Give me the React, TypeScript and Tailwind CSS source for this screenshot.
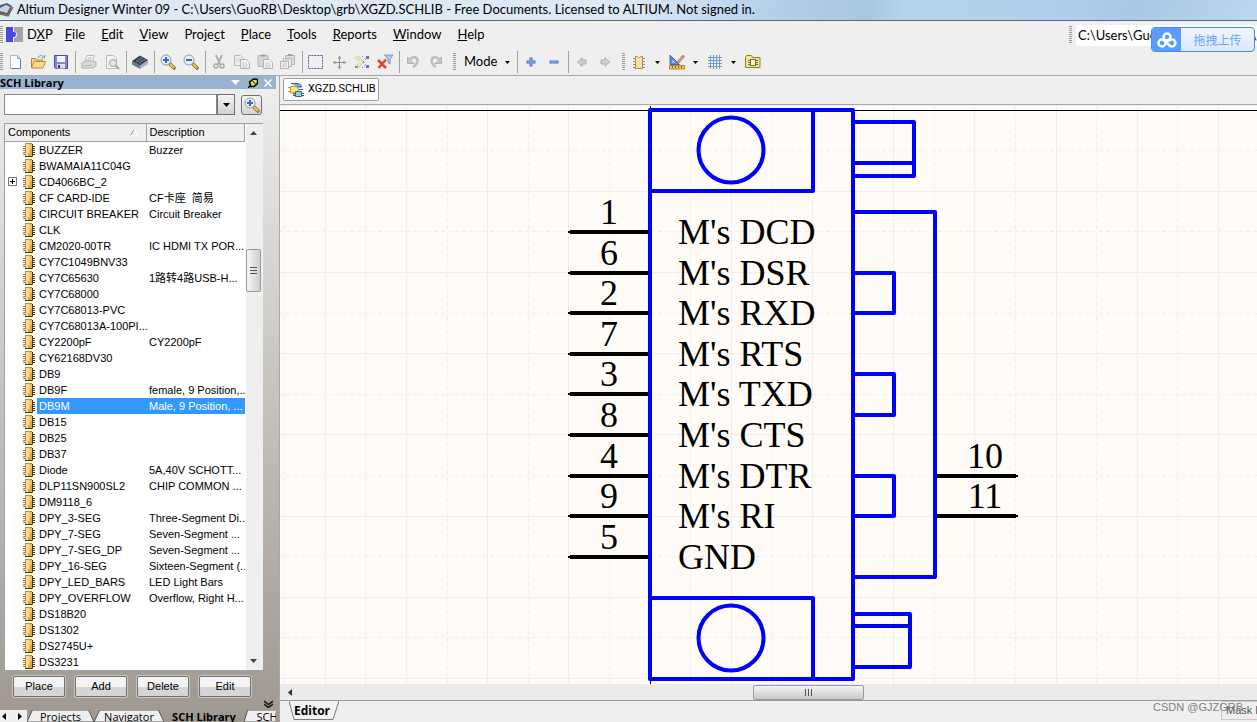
import React from 'react';

interface LibraryPart {
  name: string;
  description?: string;
  expandable?: boolean;
}

const parts: LibraryPart[] = [
  { name: 'BUZZER', description: 'Buzzer' },
  { name: 'BWAMAIA11C04G' },
  { name: 'CD4066BC_2', expandable: true },
  { name: 'CF CARD-IDE', description: 'CF卡座  简易' },
  { name: 'CIRCUIT BREAKER', description: 'Circuit Breaker' },
  { name: 'CLK' },
  { name: 'CM2020-00TR', description: 'IC HDMI TX POR...' },
  { name: 'CY7C1049BNV33' },
  { name: 'CY7C65630', description: '1路转4路USB-H...' },
  { name: 'CY7C68000' },
  { name: 'CY7C68013-PVC' },
  { name: 'CY7C68013A-100PI...' },
  { name: 'CY2200pF', description: 'CY2200pF' },
  { name: 'CY62168DV30' },
  { name: 'DB9' },
  { name: 'DB9F', description: 'female, 9 Position,...' },
  { name: 'DB9M', description: 'Male, 9 Position, ...' },
  { name: 'DB15' },
  { name: 'DB25' },
  { name: 'DB37' },
  { name: 'Diode', description: '5A,40V SCHOTT...' },
  { name: 'DLP11SN900SL2', description: 'CHIP COMMON ...' },
  { name: 'DM9118_6' },
  { name: 'DPY_3-SEG', description: 'Three-Segment Di...' },
  { name: 'DPY_7-SEG', description: 'Seven-Segment ...' },
  { name: 'DPY_7-SEG_DP', description: 'Seven-Segment ...' },
  { name: 'DPY_16-SEG', description: 'Sixteen-Segment (...' },
  { name: 'DPY_LED_BARS', description: 'LED Light Bars' },
  { name: 'DPY_OVERFLOW', description: 'Overflow, Right H...' },
  { name: 'DS18B20' },
  { name: 'DS1302' },
  { name: 'DS2745U+' },
  { name: 'DS3231' },
];

// [before, underlined letter, after]
const menus: [string, string, string][] = [
  ['', 'F', 'ile'],
  ['', 'E', 'dit'],
  ['', 'V', 'iew'],
  ['Proje', 'c', 't'],
  ['', 'P', 'lace'],
  ['', 'T', 'ools'],
  ['', 'R', 'eports'],
  ['', 'W', 'indow'],
  ['', 'H', 'elp'],
];

const leftPins = [
  { number: '1', label: "M's DCD" },
  { number: '6', label: "M's DSR" },
  { number: '2', label: "M's RXD" },
  { number: '7', label: "M's RTS" },
  { number: '3', label: "M's TXD" },
  { number: '8', label: "M's CTS" },
  { number: '4', label: "M's DTR" },
  { number: '9', label: "M's RI" },
  { number: '5', label: 'GND' },
];

const Svg: React.FC<{ children: React.ReactNode; className?: string }> = ({ children, className = 'w-4 h-4' }) => (
  <svg viewBox="0 0 16 16" className={`${className} shrink-0`} fill="none" aria-hidden="true">
    {children}
  </svg>
);

const ChipIcon = () => (
  <svg viewBox="0 0 12 14" className="w-3 h-3.5 shrink-0" aria-hidden="true">
    <path d="M0 3.500h3M0 5.500h3M0 7.500h3M0 9.500h3M0 11.500h3" stroke="#8a7c58" />
    <path d="M9 3.500h3M9 5.500h3M9 7.500h3M9 9.500h3M9 11.500h3" stroke="#3a3222" />
    <path d="M3 1h6v12H3z" fill="#eec56a" />
    <path d="M3 1h3v12H3z" fill="#f8dc98" />
    <path d="M7 6h2v7H5v-3h2z" fill="#dfa845" />
    <path d="M2.500 13V.500H9" stroke="#b08d45" fill="none" />
    <path d="M9.500 1v12.500H2" stroke="#4a3712" fill="none" />
  </svg>
);

const ZoomIcon: React.FC<{ minus?: boolean }> = ({ minus }) => (
  <Svg>
    <path d="M10 10l4 4" stroke="#8a6a1c" strokeWidth="3.500" strokeLinecap="round" />
    <path d="M10.500 10.500l3 3" stroke="#ecc860" strokeWidth="2" strokeLinecap="round" />
    <circle cx="6" cy="6" r="5" fill="#e4f0ff" stroke="#8f9bb3" />
    <path d={minus ? 'M3 6h6' : 'M3 6h6M6 3v6'} stroke="#3b68c4" strokeWidth="2" />
  </Svg>
);

const CopyIcon: React.FC<{ board?: boolean }> = ({ board }) => (
  <Svg>
    {board && <rect x="1" y="1.500" width="10" height="11" rx="1" fill="#d5d5d5" stroke="#b5b5b5" />}
    {board && <path d="M4 1.500h4" stroke="#9f9f9f" strokeWidth="2" />}
    {!board && <path d="M.500 1.500h6l3 3v7h-9z" fill="#f1f1f1" stroke="#b9b9b9" />}
    {!board && <path d="M2 5h5M2 7h5" stroke="#ccc" />}
    <path d="M6.500 5.500h6l3 3v6h-9z" fill="#f3f3f3" stroke="#b3b3b3" />
    <path d="M8 9h5M8 11h6M8 13h5" stroke="#c6c6c6" />
  </Svg>
);

const PasteArrayIcon = () => (
  <Svg>
    <path d="M5.500 1.500h9v9h-9z" fill="#dcdcdc" stroke="#b5b5b5" />
    <path d="M8 1h4" stroke="#9f9f9f" strokeWidth="2" />
    <path d="M3.500 4.500h8v8h-8z" fill="#efefef" stroke="#b5b5b5" />
    <path d="M.500 7.500h8v7h-8z" fill="#f3f3f3" stroke="#b3b3b3" />
    <path d="M2 10h5M2 12h5M5 6h5" stroke="#c2c2c2" />
  </Svg>
);

const DocIcon = () => (
  <Svg>
    <path d="M3.500 1.500h7l3 3v10h-10z" fill="#fbfdff" stroke="#a9b8cd" />
    <path d="M10.500 1.500v3h3" fill="#d4e0f0" stroke="#8fa2bd" />
    <path d="M4.500 14.500h9v-9" stroke="#62799b" />
  </Svg>
);

const OpenIcon = () => (
  <Svg>
    <path d="M1.500 13.500v-9h4l1 1.500h6v3" fill="#f4d78a" stroke="#b28a35" />
    <path d="M1.500 14L4 7.500h11.500L13 14z" fill="#fbdc8c" stroke="#b98f37" />
    <path d="M8 4c1-3 4-3 5.500-1M14.500 1v3h-3" stroke="#7593c2" />
  </Svg>
);

const SaveIcon = () => (
  <Svg>
    <path d="M1.500 1.500h13v13h-12l-1-1z" fill="#8583e0" stroke="#4c4aab" />
    <rect x="4" y="2" width="8" height="6" fill="#f5f7ff" />
    <rect x="4" y="10" width="8" height="4.500" fill="#dfe0f6" />
    <rect x="5" y="11" width="2" height="3" fill="#38367d" />
  </Svg>
);

const PrintIcon = () => (
  <Svg>
    <path d="M4 8l2-6.500h7L11.500 8" fill="#f7f7f7" stroke="#b8b8b8" />
    <path d="M1 9l3-2h9l2 1v4l-3 2H1z" fill="#d9d9d9" stroke="#b1b1b1" />
    <path d="M2 11.500h9M7 4h4M6 6h4" stroke="#b9b9b9" />
  </Svg>
);

const PreviewIcon = () => (
  <Svg>
    <path d="M2.500 1.500h7l3 3v10h-10z" fill="#f4f4f4" stroke="#bcbcbc" />
    <circle cx="9" cy="9" r="3.500" fill="#e6e6e6" stroke="#a5a5a5" />
    <path d="M11.500 11.500L15 15" stroke="#a5a5a5" strokeWidth="2" />
  </Svg>
);

const LibraryIcon = () => (
  <Svg>
    <path d="M0 7l8 4.500V15L0 10.500z" fill="#6b7889" />
    <path d="M16 6l-8 5.500V15l8-5z" fill="#9fb2ca" />
    <path d="M0 7l8-5.500L16 6l-8 5.500z" fill="#35414f" />
    <path d="M4 6.500l5 2.800M6 5l5 2.800M8 3.500l5 2.800M4 8l6-4.500M7 9.500l6-4.500" stroke="#76879b" strokeWidth=".7" />
  </Svg>
);

const CutIcon = () => (
  <Svg>
    <path d="M5 1l4 9M11 1l-4 9" stroke="#b0b0b0" strokeWidth="2" />
    <circle cx="5" cy="12" r="2" stroke="#a8a8a8" strokeWidth="1.500" />
    <circle cx="11" cy="12" r="2" stroke="#a8a8a8" strokeWidth="1.500" />
  </Svg>
);

const SelectIcon = () => (
  <Svg>
    <rect x=".5" y="1.500" width="14" height="13" stroke="#45639f" strokeDasharray="2 1" />
  </Svg>
);

const MoveIcon = () => (
  <Svg>
    <path d="M8.500 2v13M2 8.500h13" stroke="#8c8c8c" />
    <path d="M6.500 4.500h4l-2-3zM6.500 12.500h4l-2 3zM4.500 6.500v4l-3-2zM12.500 6.500v4l3-2z" fill="#9a9a9a" />
  </Svg>
);

const DeselectIcon = () => (
  <Svg>
    <path d="M1 3l4 4M4 2l5 6-5 6M1 13l4-4" stroke="#d8c25a" strokeWidth="1.500" strokeDasharray="1.500 1" />
    <path d="M9 8l4-4M9 8l4 4M8 2l3 3M8 14l3-3" stroke="#7d93bd" strokeDasharray="1.500 1" />
    <path d="M12 2h3v3h-3zM12 11h3v3h-3z" fill="#5b79ae" />
    <path d="M1 12h3v2H1z" fill="#7d93bd" />
  </Svg>
);

const ClearFilterIcon = () => (
  <Svg>
    <path d="M7.500 1h8.500l-3 4v5l-2-1.500V5z" fill="#b9c9e3" stroke="#7189b5" strokeWidth=".8" />
    <path d="M1 6l8 8M9 5.500L1.500 14" stroke="#e0442e" strokeWidth="2.500" />
  </Svg>
);

const UndoIcon: React.FC<{ redo?: boolean }> = ({ redo }) => (
  <Svg>
    <g transform={redo ? 'translate(16 0) scale(-1 1)' : undefined}>
      <path d="M5 5c4-3 8-2 7.500 2.500-.5 2.500-2 4-4.500 5.500" stroke="#bdbdbd" strokeWidth="2.500" />
      <path d="M2.500 3v6.500H9z" fill="#c9c9c9" stroke="#b3b3b3" />
    </g>
  </Svg>
);

const ArrowIcon: React.FC<{ right?: boolean }> = ({ right }) => (
  <Svg>
    <path
      d={right ? 'M4 6h4V3.500L12.500 8 8 12.500V10H4z' : 'M12 6H8V3.500L3.500 8 8 12.500V10h4z'}
      fill="#cfcfcf"
      stroke="#adadad"
    />
  </Svg>
);

const PartIcon = () => (
  <Svg>
    <path d="M2 4.500h12M2 7.500h12M2 10.500h12M2 13.500h12" stroke="#87909c" />
    <path d="M4.500 2.500h2l1 1h1l1-1h2v12h-7z" fill="#f9dfa6" stroke="#a98a4b" />
  </Svg>
);

const DrawIcon = () => (
  <Svg>
    <path d="M1 1v9.500h9.500z" fill="#5f86dc" stroke="#4068bd" />
    <path d="M3.500 6v2.500H6z" fill="#eef3ff" />
    <path d="M8 8l6-7 1.500 1.500-6 7z" fill="#dd9b85" stroke="#a56452" strokeWidth=".7" />
    <rect x=".5" y="11.500" width="15" height="3.500" fill="#f5c65c" stroke="#b98a2c" />
    <path d="M3.500 12v2M6.500 12v2M9.500 12v2M12.500 12v2" stroke="#8c6519" />
  </Svg>
);

const GridIcon = () => (
  <Svg>
    <path d="M1 3.500h14M1 6.500h14M1 9.500h14M1 12.500h14M3.500 1v14M6.500 1v14M9.500 1v14M12.500 1v14" stroke="#6f97e0" />
  </Svg>
);

const FolderPartIcon = () => (
  <Svg>
    <path d="M.5 13.500v-10l1-2h5l1 2h7.500v10z" fill="#f2e691" stroke="#8b8132" />
    <path d="M3 6.500h10M3 8.500h10M3 10.500h10" stroke="#6d6d4c" />
    <rect x="5.500" y="5.500" width="5" height="6" fill="#fff8cd" stroke="#6d6d4c" />
  </Svg>
);

const SchLibIcon = () => (
  <Svg>
    <path d="M3 1.500h6c3 0 4.500 2 4.500 3.500H9" fill="#79aef0" stroke="#2a62b8" />
    <path d="M0 5.500h3M0 9.500h3" stroke="#d08a16" />
    <path d="M9 7.500h6M9 12h-4M16 11.500h-3" stroke="#2a62b8" />
    <path d="M2.500 4.500h4c3 0 4 2 4 3.200s-1 3.300-4 3.300h-4z" fill="#ffe27a" stroke="#d08a16" />
    <path d="M7.500 9.500h6v5h-6z" fill="#9fd0c6" stroke="#33628b" />
    <path d="M5 11.500h2M5 13.500h2M14 13.500h2" stroke="#33628b" />
  </Svg>
);

const Grip = () => (
  <span className="h-[18px] w-[3px] shrink-0 bg-[repeating-linear-gradient(to_bottom,#9a9a9a_0px,#9a9a9a_1px,transparent_1px,transparent_2px)]" />
);

const Separator = () => <span className="ml-[3px] mr-px h-[22px] w-px shrink-0 bg-[#a0a0a0]" />;

const Caret = () => (
  <svg viewBox="0 0 5 3" className="h-[3px] w-[5px] shrink-0" aria-hidden="true">
    <path d="M0 0h5L2.500 3z" fill="#000" />
  </svg>
);

const Tool: React.FC<{ label: string; children: React.ReactNode }> = ({ label, children }) => (
  <button type="button" aria-label={label} className="flex h-6 w-[23px] shrink-0 items-center justify-center">
    {children}
  </button>
);

const TitleBar = () => (
  <header className="flex h-[21px] shrink-0 items-center overflow-hidden border-b border-[#56687a] bg-[linear-gradient(100deg,#dfeaf5_0%,#dce8f5_50%,#b3cfea_62%,#a9c6e2_69%,#b5d3ee_72%,#b1cfec_85%,#a9c8e5_90%,#bdd6f0_100%)]">
    <svg viewBox="0 0 14 16" className="h-4 w-3.5 shrink-0" aria-hidden="true">
      <path d="M0 3l7-2 5 3-3 10-9-2z" fill="#57616e" />
      <path d="M0 6l6-3 4 2-3 6-7-2z" fill="#c9d3df" />
      <path d="M0 12l8 2 5-9" stroke="#8c6a42" strokeWidth="1.500" fill="none" />
    </svg>
    <h1 className="ml-[3px] whitespace-nowrap text-[13px] text-black">
      Altium Designer Winter 09 - C:\Users\GuoRB\Desktop\grb\XGZD.SCHLIB - Free Documents. Licensed to ALTIUM. Not signed in.
    </h1>
  </header>
);

const MenuBar = () => (
  <nav className="flex h-7 shrink-0 items-center text-[13px]">
    <Grip />
    <button type="button" className="flex items-center pl-[3px] pr-1">
      <svg viewBox="0 0 17 16" className="mr-1 h-4 w-[17px]" aria-hidden="true">
        <path d="M0 0h7v5c4-2 4 6 0 5v5H0z" fill="#4a4ae0" />
        <path d="M8 0h9v15H8v-4c4 1 4-8 0-6z" fill="#a3a3a3" />
      </svg>
      <span>
        D<u>X</u>P
      </span>
    </button>
    {menus.map(([before, key, after]) => (
      <button type="button" key={before + key + after} className="px-2">
        {before}
        <u>{key}</u>
        {after}
      </button>
    ))}
    <span className="grow" />
    <Grip />
    <input
      aria-label="Document path"
      defaultValue="C:\Users\GuoRB\Desktop\grb\XGZD.SCHLIB"
      className="ml-1 h-[21px] w-[181px] bg-white pl-0.5 outline-none"
    />
  </nav>
);

const Toolbar = () => (
  <div role="toolbar" className="flex h-[27px] shrink-0 items-center border-b border-[#a8a8a8]">
    <Grip />
    <Tool label="New"><DocIcon /></Tool>
    <Tool label="Open"><OpenIcon /></Tool>
    <Tool label="Save"><SaveIcon /></Tool>
    <Separator />
    <Tool label="Print"><PrintIcon /></Tool>
    <Tool label="Print preview"><PreviewIcon /></Tool>
    <Separator />
    <Tool label="Devices view"><LibraryIcon /></Tool>
    <Separator />
    <Tool label="Zoom in"><ZoomIcon /></Tool>
    <Tool label="Zoom out"><ZoomIcon minus /></Tool>
    <Separator />
    <Tool label="Cut"><CutIcon /></Tool>
    <Tool label="Copy"><CopyIcon /></Tool>
    <Tool label="Paste"><CopyIcon board /></Tool>
    <Tool label="Paste array"><PasteArrayIcon /></Tool>
    <Separator />
    <Tool label="Select"><SelectIcon /></Tool>
    <Tool label="Move"><MoveIcon /></Tool>
    <Tool label="Deselect"><DeselectIcon /></Tool>
    <Tool label="Clear filter"><ClearFilterIcon /></Tool>
    <Separator />
    <Tool label="Undo"><UndoIcon /></Tool>
    <Tool label="Redo"><UndoIcon redo /></Tool>
    <span className="w-1.5" />
    <Grip />
    <button type="button" className="flex items-center gap-2 pl-2 pr-1 text-[13px]">
      Mode
      <Caret />
    </button>
    <Separator />
    <Tool label="Add mode">
      <Svg><path d="M8 3.500v9M3.500 8h9" stroke="#4f7bd0" strokeWidth="3" /><path d="M8 4.500v7M4.500 8h7" stroke="#8fb0ee" /></Svg>
    </Tool>
    <Tool label="Remove mode">
      <Svg><path d="M3.500 8h9" stroke="#4f7bd0" strokeWidth="3" /><path d="M4.500 8h7" stroke="#8fb0ee" /></Svg>
    </Tool>
    <Separator />
    <Tool label="Previous mode"><ArrowIcon /></Tool>
    <Tool label="Next mode"><ArrowIcon right /></Tool>
    <span className="w-1.5" />
    <Grip />
    <button type="button" aria-label="Place part" className="flex items-center gap-2 pl-1.5"><PartIcon /><Caret /></button>
    <button type="button" aria-label="Drawing tools" className="flex items-center gap-2 pl-[9px]"><DrawIcon /><Caret /></button>
    <button type="button" aria-label="Grids" className="flex items-center gap-2 pl-[9px]"><GridIcon /><Caret /></button>
    <button type="button" aria-label="Model manager" className="pl-[9px]"><FolderPartIcon /></button>
  </div>
);

const PanelButton: React.FC<{ children: string }> = ({ children }) => (
  <button
    type="button"
    className="h-[21px] w-[52px] rounded-[2px] border border-[#707070] bg-gradient-to-b from-[#f4f4f4] from-50% to-[#d6d6d6] to-55% shadow-[0_0_0_1px_#c9c6c1]"
  >
    {children}
  </button>
);

const ComponentTable = () => (
  <table className="w-[240px] shrink-0 table-fixed border-collapse self-start">
    <colgroup>
      <col className="w-[141px]" />
      <col />
    </colgroup>
    <thead>
      <tr className="h-[17px] border-b border-[#a0a0a0] bg-[#efefef] text-left leading-4">
        <th className="p-0 pl-[3px] font-normal">
          <span className="flex items-center justify-between pr-2">
            Components
            <svg viewBox="0 0 8 7" className="h-[7px] w-2" aria-hidden="true">
              <path d="M.500 6.500L4 .500" stroke="#999" />
              <path d="M4 .500l3.500 6h-7" stroke="#fff" fill="none" />
            </svg>
          </span>
        </th>
        <th className="border-x border-[#a0a0a0] p-0 pl-[3px] font-normal">Description</th>
      </tr>
    </thead>
    <tbody>
      {parts.map((part) => {
        const selected = part.name === 'DB9M';
        return (
          <tr key={part.name} className="h-4">
            <td className="p-0">
              <div className="flex h-4 items-center whitespace-nowrap">
                <span className="flex w-[18px] shrink-0 pl-[3px]">
                  {part.expandable && (
                    <svg viewBox="0 0 9 9" className="h-[9px] w-[9px]" aria-hidden="true">
                      <path d="M.5 .5h8v8h-8z" fill="#fff" stroke="#777" />
                      <path d="M2 4.500h5M4.500 2v5" stroke="#000" />
                    </svg>
                  )}
                </span>
                <ChipIcon />
                <span className={`ml-0.5 grow pl-[2px] leading-4 ${selected ? 'bg-[#3399ff] text-white' : ''}`}>{part.name}</span>
              </div>
            </td>
            <td className={`whitespace-pre p-0 pl-[3px] leading-4 ${selected ? 'bg-[#3399ff] text-white' : ''}`}>
              {part.description}
            </td>
          </tr>
        );
      })}
    </tbody>
  </table>
);

const ListScrollbar = () => (
  <div className="flex grow flex-col items-center border-l border-white bg-[#efefef] pr-0.5">
    <svg viewBox="0 0 7 4" className="mt-[7px] h-1 w-[7px]" aria-hidden="true"><path d="M0 4h7L3.500 0z" fill="#444" /></svg>
    <div className="mt-[114px] flex h-[43px] w-[15px] flex-col items-center justify-center gap-0.5 rounded-[2px] border border-[#999] bg-gradient-to-r from-[#f5f5f5] to-[#cfcfcf]">
      <span className="h-px w-[7px] bg-[#555]" />
      <span className="h-px w-[7px] bg-[#555]" />
      <span className="h-px w-[7px] bg-[#555]" />
    </div>
    <span className="grow" />
    <svg viewBox="0 0 7 4" className="mb-[7px] h-1 w-[7px]" aria-hidden="true"><path d="M0 0h7L3.500 4z" fill="#444" /></svg>
  </div>
);

const PanelTab: React.FC<{ children: string; active?: boolean; className?: string }> = ({ children, active, className = '' }) => (
  <button type="button" className={`relative h-3 shrink-0 ${className}`}>
    <svg viewBox="0 0 100 12" preserveAspectRatio="none" className="absolute inset-0 h-full w-full" aria-hidden="true">
      {!active && <path d="M8 0h84l8 12H0z" fill="#efefef" stroke="#555" vectorEffect="non-scaling-stroke" />}
    </svg>
    <span className={`relative block leading-[14px] ${active ? 'font-bold' : ''}`}>{children}</span>
  </button>
);

const LibraryPanel = () => (
  <aside className="flex w-[280px] shrink-0 flex-col border-r border-[#a8a8a8] bg-gradient-to-b from-[#efefef] to-[#9e9890] font-['Liberation_Sans','Noto_Sans_CJK_SC',sans-serif] text-[11px]">
    <div className="mr-[3px] flex h-[13px] shrink-0 items-center bg-[#99b4d1] pr-1">
      <h2 className="grow font-['Open_Sans',sans-serif] text-[11px] font-bold leading-[13px]">SCH Library</h2>
      <svg viewBox="0 0 9 5" className="h-[5px] w-[9px]" aria-hidden="true"><path d="M0 0h9L4.500 5z" fill="#fff" /></svg>
      <svg viewBox="0 0 10 10" className="ml-2 h-2.5 w-2.5" aria-hidden="true">
        <path d="M0 10l4-4" stroke="#000" strokeWidth="1.500" />
        <path d="M1.500 4l4-3 4 .500v4L6 8.500H3z" fill="#e8dc55" stroke="#000" strokeWidth="1.500" />
        <path d="M4 2.500l4 4" stroke="#000" />
      </svg>
      <svg viewBox="0 0 8 8" className="ml-1.5 h-2 w-2" aria-hidden="true"><path d="M.5 .5l7 7M7.500 .5l-7 7" stroke="#fff" strokeWidth="1.500" /></svg>
    </div>

    <div className="ml-1 mt-[5px] flex shrink-0 items-center">
      <input aria-label="Filter components" className="h-[21px] w-[213px] border border-[#8a8a8a] bg-white px-1 outline-none" />
      <button type="button" aria-label="Show filters" className="flex h-[21px] w-[18px] items-center justify-center border border-[#707070] bg-gradient-to-b from-[#f4f4f4] to-[#d2d2d2]">
        <svg viewBox="0 0 7 4" className="h-1 w-[7px]" aria-hidden="true"><path d="M0 0h7L3.500 4z" fill="#000" /></svg>
      </button>
      <button type="button" aria-label="Find component" className="ml-1.5 flex h-5 w-[21px] items-center justify-center rounded-[3px] border border-[#707070] bg-gradient-to-b from-[#f4f4f4] to-[#d6d6d6]">
        <ZoomIcon />
      </button>
    </div>

    <div className="ml-1 mt-2 flex min-h-0 w-[259px] grow overflow-hidden border border-r-0 border-[#a0a0a0] bg-white">
      <ComponentTable />
      <ListScrollbar />
    </div>

    <div className="ml-[13px] mt-[5px] flex shrink-0 gap-2.5">
      <PanelButton>Place</PanelButton>
      <PanelButton>Add</PanelButton>
      <PanelButton>Delete</PanelButton>
      <PanelButton>Edit</PanelButton>
    </div>

    <div className="flex h-[13px] shrink-0 items-end justify-end pb-0.5 pr-1.5">
      <svg viewBox="0 0 9 8" className="h-2 w-[9px]" aria-hidden="true">
        <path d="M0 1l4.500 3.500L9 1M0 4l4.500 3.500L9 4" stroke="#111" strokeWidth="1.500" fill="none" />
      </svg>
    </div>

    <div className="mr-[3px] flex h-3 shrink-0 overflow-hidden font-['Open_Sans',sans-serif]">
      <div className="flex w-[27px] shrink-0 items-center gap-3 bg-[#efefef] pl-0.5">
        <svg viewBox="0 0 4 7" className="h-[7px] w-1" aria-hidden="true"><path d="M4 0v7L0 3.500z" /></svg>
        <svg viewBox="0 0 4 7" className="h-[7px] w-1" aria-hidden="true"><path d="M0 0v7l4-3.500z" /></svg>
      </div>
      <PanelTab className="w-[67px]">Projects</PanelTab>
      <PanelTab className="w-[70px]">Navigator</PanelTab>
      <PanelTab className="w-20" active>SCH Library</PanelTab>
      <PanelTab className="w-[46px]">SCH</PanelTab>
    </div>
  </aside>
);

const GRID = 40.6;

// Origin of the sheet is the top left corner of the part body
const Sheet = () => (
  <svg className="h-full w-full bg-[#fffcf7]" role="img" aria-label="DB9M schematic symbol">
    <g transform="translate(370 4)">
      <g stroke="#eeeeec" shapeRendering="crispEdges">
        {Array.from({ length: 60 }, (_, i) => i - 9).map((i) => (
          <line key={i} x1={i * GRID} x2={i * GRID} y1={-4} y2={2000} strokeDasharray={i % 2 ? '4 3' : undefined} />
        ))}
        {Array.from({ length: 40 }, (_, i) => i).map((i) => (
          <line key={i} x1={-370} x2={2600} y1={i * GRID} y2={i * GRID} strokeDasharray={i % 2 ? '4 3' : undefined} />
        ))}
      </g>

      <path d="M-370 .5H2600M.5 -4V2000" stroke="#000" shapeRendering="crispEdges" />

      <g stroke="#0000ff" strokeWidth="4" fill="none" strokeLinejoin="round">
        <rect x="0" y="0" width="203" height="569" />
        <path d="M163 0v81H0M0 488h163v81" />
        <circle cx="81" cy="40" r="32.500" />
        <circle cx="81" cy="528" r="32.500" />
        <path d="M203 12h61v54h-61M203 53h61" />
        <path d="M203 504h57v53h-57M203 516h57" />
        <path d="M203 102h82v365h-82" />
        <path d="M203 163h41v40h-41M203 264h41v41h-41M203 366h41v40h-41" />
      </g>

      <g fontSize="36" fontFamily="'Liberation Serif', 'Times New Roman', serif" fill="#000">
        {leftPins.map((pin, i) => {
          const y = Math.round(122 + i * GRID);
          return (
            <g key={pin.number}>
              <path d={`M-80 ${y}H-2`} stroke="#000" strokeWidth="4" />
              <path d={`M-82 ${y}h2`} stroke="#000" strokeWidth="2" />
              <text x="-41" y={y - 8} textAnchor="middle">{pin.number}</text>
              <text x="28" y={y + 12}>{pin.label}</text>
            </g>
          );
        })}
        <path d="M287 366h79M287 406h79" stroke="#000" strokeWidth="4" />
        <path d="M366 366h2M366 406h2" stroke="#000" strokeWidth="2" />
        <text x="335" y="358" textAnchor="middle">10</text>
        <text x="335" y="398" textAnchor="middle">11</text>
      </g>
    </g>
  </svg>
);

const Editor = () => (
  <main className="flex min-w-0 grow flex-col">
    <div className="flex h-[29px] shrink-0 items-start border-b border-[#a8a8a8] pl-[3px] pt-0.5">
      <button type="button" className="flex h-[23px] items-center gap-1 rounded-[2px] border border-[#a0a0a0] bg-white pl-1 pr-0.5 font-[Roboto,sans-serif] text-[11px]">
        <SchLibIcon />
        XGZD.SCHLIB
      </button>
    </div>
    <div className="mt-px min-h-0 grow overflow-hidden">
      <Sheet />
    </div>
    <div className="flex h-4 shrink-0 items-center bg-[#ebebeb]">
      <svg viewBox="0 0 4 7" className="ml-2 h-[7px] w-1" aria-hidden="true"><path d="M4 0v7L0 3.500z" fill="#333" /></svg>
      <span className="basis-[461px]" />
      <div className="flex h-[15px] w-[111px] items-center justify-center gap-0.5 rounded-[2px] border border-[#999] bg-gradient-to-b from-[#f5f5f5] to-[#c8c8c8]">
        <span className="h-[7px] w-px bg-[#555]" />
        <span className="h-[7px] w-px bg-[#555]" />
        <span className="h-[7px] w-px bg-[#555]" />
      </div>
    </div>
    <footer className="flex h-[22px] shrink-0 items-start justify-between border-t border-[#999]">
      <button type="button" className="relative ml-[9px] h-[19px] w-[50px] pr-1 font-['Open_Sans',sans-serif] text-xs font-bold leading-4">
        <svg viewBox="0 0 50 19" className="absolute inset-0 h-[19px] w-[50px]" aria-hidden="true">
          <path d="M0 0l5 18.500h39L50 0" fill="#f3f3f3" stroke="#777" />
        </svg>
        <span className="relative">Editor</span>
      </button>
      <button type="button" className="h-[19px] w-9 overflow-hidden whitespace-nowrap border border-r-0 border-[#c9c9c9] pl-1 text-left font-['Liberation_Sans',sans-serif] text-[11px] text-[#555]">
        Mask Level
      </button>
    </footer>
  </main>
);

const UploadWidget = () => (
  <button type="button" className="absolute right-0.5 top-[27px] flex h-[25px] w-[104px] overflow-hidden rounded border border-[#3d8bfd] bg-gradient-to-b from-[#f1f6ff] to-[#dce9fd]">
    <span className="flex h-full w-[29px] items-center justify-center bg-[#5a9bff]">
      <svg viewBox="0 0 20 16" className="h-4 w-5" fill="none" stroke="#fff" strokeWidth="2.500" aria-hidden="true">
        <circle cx="10" cy="5" r="3.500" />
        <circle cx="5" cy="11" r="3.500" />
        <path d="M7.500 8.500l5 5a3.500 3.500 0 1 0 0-5z" />
      </svg>
    </span>
    <span className="grow self-center font-['Noto_Sans_CJK_SC',sans-serif] text-xs leading-4 text-[#6ba1fb]">拖拽上传</span>
  </button>
);

const App: React.FC = () => (
  <div className="relative flex h-screen flex-col overflow-hidden bg-[#efefef] font-[Lato,'Noto_Sans_CJK_SC',sans-serif] text-black">
    <TitleBar />
    <MenuBar />
    <Toolbar />
    <div className="flex min-h-0 grow">
      <LibraryPanel />
      <Editor />
    </div>
    <UploadWidget />
    <span className="absolute bottom-[7px] right-3.5 font-['Liberation_Sans',sans-serif] text-[11px] leading-4 text-[#808080]">CSDN @GJZGRB</span>
  </div>
);

export default App;
